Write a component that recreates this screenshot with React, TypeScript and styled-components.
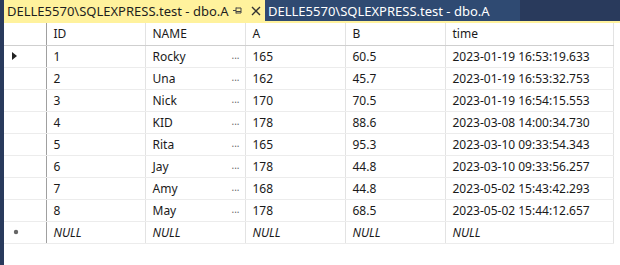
import styled, { createGlobalStyle } from "styled-components";

const GlobalStyle = createGlobalStyle`
  html, body {
    margin: 0;
    padding: 0;
    background: #ffffff;
  }
  body {
    font-family: "Noto Sans", "Open Sans", sans-serif;
  }
  *, *::before, *::after {
    box-sizing: border-box;
  }
`;

const Window = styled.main`
  width: 620px;
  height: 265px;
  display: flex;
  flex-direction: column;
  background: #ffffff;
  border-left: 4px solid #293a5c;
  overflow: hidden;
`;

const TabBar = styled.header`
  height: 23px;
  flex-shrink: 0;
  display: flex;
  align-items: stretch;
  background: #293a5c;
  border-bottom: 2px solid #fff29d;
`;

const Tab = styled.div<{ $active?: boolean }>`
  display: flex;
  align-items: center;
  width: ${(p) => (p.$active ? 261 : 255)}px;
  padding-left: 3px;
  background: ${(p) => (p.$active ? "#fff29d" : "#2f4a72")};
  color: ${(p) => (p.$active ? "#1e1e1e" : "#ffffff")};
  font-size: 13px;
  white-space: nowrap;
`;

const TabTitle = styled.span`
  flex: 1;
`;

const TabIcon = styled.span`
  display: flex;
  align-items: center;
  justify-content: center;
  width: 17px;
  height: 17px;
  margin-right: 1px;
`;

const Table = styled.table`
  border-collapse: collapse;
  table-layout: fixed;
  width: 609px;
  font-size: 12px;
  color: #1a1a1a;
`;

const HeadCell = styled.th<{ $w: number }>`
  width: ${(p) => p.$w}px;
  height: 22px;
  padding: 0 0 0 7px;
  text-align: left;
  font-weight: 400;
  border-right: 1px solid #e3e3e3;
  border-bottom: 1px solid #cfcfcf;
  &:first-child {
    border-right: 1px solid #a0a0a0;
  }
`;

const RowHead = styled.td`
  height: 22px;
  padding: 0;
  border-right: 1px solid #a0a0a0;
  border-bottom: 1px solid #ececec;
`;

const Cell = styled.td<{ $null?: boolean }>`
  height: 22px;
  padding: 0 0 0 7px;
  white-space: nowrap;
  overflow: hidden;
  border-right: 1px solid #e3e3e3;
  border-bottom: 1px solid #ececec;
  font-style: ${(p) => (p.$null ? "italic" : "normal")};
`;

const NameCell = styled.div`
  display: flex;
  justify-content: space-between;
  padding-right: 5px;
`;

const Dots = styled.span`
  color: #666;
  font-size: 10px;
`;

const Marker = styled.div<{ $indent: number }>`
  display: flex;
  align-items: center;
  padding-left: ${(p) => p.$indent}px;
`;

const rows = [
  [1, "Rocky", 165, "60.5", "2023-01-19 16:53:19.633"],
  [2, "Una", 162, "45.7", "2023-01-19 16:53:32.753"],
  [3, "Nick", 170, "70.5", "2023-01-19 16:54:15.553"],
  [4, "KID", 178, "88.6", "2023-03-08 14:00:34.730"],
  [5, "Rita", 165, "95.3", "2023-03-10 09:33:54.343"],
  [6, "Jay", 178, "44.8", "2023-03-10 09:33:56.257"],
  [7, "Amy", 168, "44.8", "2023-05-02 15:43:42.293"],
  [8, "May", 178, "68.5", "2023-05-02 15:44:12.657"],
];

const cols: [string, number][] = [
  ["", 42],
  ["ID", 99],
  ["NAME", 100],
  ["A", 100],
  ["B", 100],
  ["time", 168],
];

const PinIcon = () => (
  <svg width="11" height="11" viewBox="0 0 11 11">
    <path d="M1 5.5h3M4 2.5v6M4 3h5v5H4M4 6.5h5" stroke="#444" fill="none" strokeWidth="1" />
  </svg>
);

const CloseIcon = () => (
  <svg width="10" height="10" viewBox="0 0 10 10">
    <path d="M1 1l8 8M9 1l-8 8" stroke="#333" strokeWidth="1.4" />
  </svg>
);

const App = () => {
  return (
    <Window>
      <GlobalStyle />
      <TabBar>
        <Tab $active>
          <TabTitle>DELLE5570\SQLEXPRESS.test - dbo.A</TabTitle>
          <TabIcon>
            <PinIcon />
          </TabIcon>
          <TabIcon>
            <CloseIcon />
          </TabIcon>
        </Tab>
        <Tab>DELLE5570\SQLEXPRESS.test - dbo.A</Tab>
      </TabBar>
      <Table>
        <thead>
          <tr>
            {cols.map(([name, w], i) => (
              <HeadCell key={i} $w={w}>
                {name}
              </HeadCell>
            ))}
          </tr>
        </thead>
        <tbody>
          {rows.map((r, i) => (
            <tr key={i}>
              <RowHead>
                {i === 0 && (
                  <Marker $indent={8}>
                    <svg width="6" height="8" viewBox="0 0 6 8">
                      <path d="M0 0l5 4-5 4z" fill="#222" />
                    </svg>
                  </Marker>
                )}
              </RowHead>
              <Cell>{r[0]}</Cell>
              <Cell>
                <NameCell>
                  <span>{r[1]}</span>
                  <Dots>...</Dots>
                </NameCell>
              </Cell>
              <Cell>{r[2]}</Cell>
              <Cell>{r[3]}</Cell>
              <Cell>{r[4]}</Cell>
            </tr>
          ))}
          <tr>
            <RowHead>
              <Marker $indent={9}>
                <svg width="6" height="6" viewBox="0 0 6 6">
                  <circle cx="3" cy="3" r="2.2" fill="#666" />
                </svg>
              </Marker>
            </RowHead>
            {["NULL", "NULL", "NULL", "NULL", "NULL"].map((v, i) => (
              <Cell key={i} $null>
                {v}
              </Cell>
            ))}
          </tr>
        </tbody>
      </Table>
    </Window>
  );
};

export default App;
